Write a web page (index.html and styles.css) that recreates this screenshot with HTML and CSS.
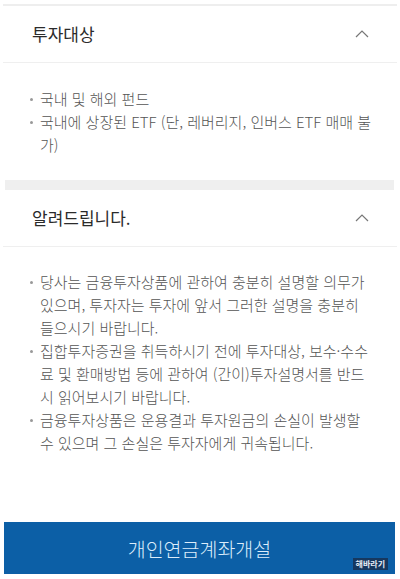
FILE: index.html
```html
<!DOCTYPE html>
<html lang="ko">
<head>
<meta charset="utf-8">
<link rel="stylesheet" href="styles.css">
</head>
<body>
<div class="page">
  <div class="topline"></div>
  <section class="acc">
    <div class="acc-head">
      <h2 class="acc-title">투자대상</h2>
      <svg class="chev" width="14" height="8" viewBox="0 0 14 8"><path d="M1 7 L7 1 L13 7" fill="none" stroke="#777" stroke-width="1.2"/></svg>
    </div>
    <ul class="acc-body first">
      <li>국내 및 해외 펀드</li>
      <li>국내에 상장된 ETF (단, 레버리지, 인버스 ETF 매매 불가)</li>
    </ul>
  </section>
  <div class="band"></div>
  <section class="acc">
    <div class="acc-head">
      <h2 class="acc-title">알려드립니다.</h2>
      <svg class="chev" width="14" height="8" viewBox="0 0 14 8"><path d="M1 7 L7 1 L13 7" fill="none" stroke="#777" stroke-width="1.2"/></svg>
    </div>
    <ul class="acc-body second">
      <li>당사는 금융투자상품에 관하여 충분히 설명할 의무가 있으며, 투자자는 투자에 앞서 그러한 설명을 충분히 들으시기 바랍니다.</li>
      <li>집합투자증권을 취득하시기 전에 투자대상, 보수·수수료 및 환매방법 등에 관하여 (간이)투자설명서를 반드시 읽어보시기 바랍니다.</li>
      <li>금융투자상품은 운용결과 투자원금의 손실이 발생할 수 있으며 그 손실은 투자자에게 귀속됩니다.</li>
    </ul>
  </section>
  <div class="cta-wrap">
    <button class="cta">개인연금계좌개설<span class="badge">해바라기</span></button>
  </div>
</div>
</body>
</html>
```

FILE: styles.css
```css
* { box-sizing: border-box; }
html, body { margin: 0; padding: 0; background: #fff; }
body {
  width: 400px;
  height: 579px;
  overflow: hidden;
  font-family: "Noto Sans CJK KR", "Noto Sans", sans-serif;
}
.page { width: 400px; }
.topline {
  margin: 4px 3px 0 3px;
  height: 2px;
  background: #eeeeee;
}
.acc-head {
  height: 57px;
  display: flex;
  align-items: center;
  justify-content: space-between;
  padding: 0 28px 0 29px;
  border-bottom: 1px solid #efefef;
  margin: 0 3px;
}
.acc-title {
  margin: 0;
  font-size: 17px;
  font-weight: 400;
  color: #2b2b2b;
  line-height: 22px;
}
.chev { display: block; }
.acc-body {
  list-style: none;
  margin: 0;
  padding: 24px 26px 24px 40px;
  font-size: 15px;
  font-weight: 300;
  line-height: 23px;
  color: #555;
}
.acc-body.second { padding-top: 23px; }
.acc-body li { position: relative; }
.acc-body li::before {
  content: "";
  position: absolute;
  left: -10px;
  top: 11px;
  width: 3px;
  height: 3px;
  border-radius: 50%;
  background: #999;
}
.band {
  margin: 0 6px 0 5px;
  height: 10px;
  background: #efefef;
}
.cta-wrap {
  padding: 0 5px 0 4px;
  margin-top: 44px;
}
.cta {
  position: relative;
  display: flex;
  align-items: center;
  justify-content: center;
  width: 100%;
  height: 52px;
  border: 0;
  margin: 0;
  padding: 0;
  background: #0c5fa6;
  color: #dcedfb;
  font-family: "Noto Sans CJK KR", "Noto Sans", sans-serif;
  font-size: 19.5px;
  font-weight: 300;
}
.badge {
  position: absolute;
  right: 7px;
  bottom: 4px;
  background: #16385f;
  color: #e8eef5;
  font-size: 8px;
  font-weight: 700;
  line-height: 12px;
  padding: 0 3px;
}
```
